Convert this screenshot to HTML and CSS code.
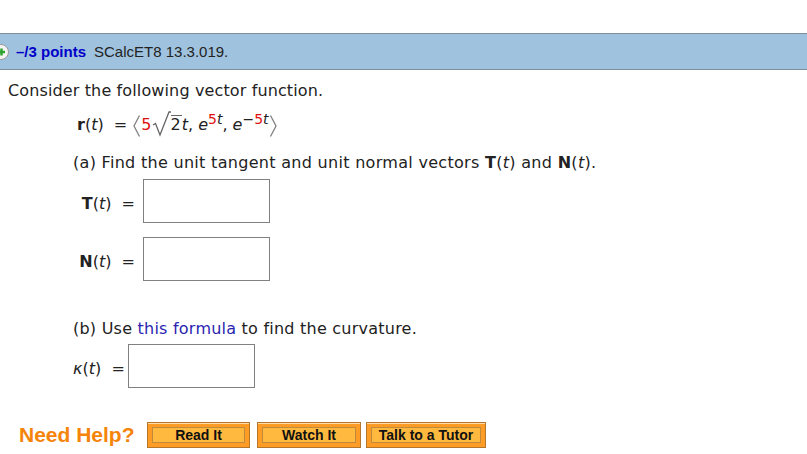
FILE: index.html
```html
<!DOCTYPE html>
<html lang="en">
<head>
<meta charset="utf-8">
<title>Question</title>
<link rel="stylesheet" href="styles.css">
</head>
<body>
<header class="qbar">
  <svg class="plus" width="12" height="20" viewBox="0 0 12 20"><circle cx="1" cy="10" r="7.5" fill="#f4f4f4" stroke="#9a9a9a"/><path d="M-2 10H5M1.500 6.500V13.500" stroke="#2fa52f" stroke-width="2.500"/></svg>
  <span class="score">–/3 points</span>
  <span class="ref">SCalcET8 13.3.019.</span>
</header>
<main class="content">
  <p class="intro">Consider the following vector function.</p>
  <p class="formula"><b>r</b>(<i>t</i>) &nbsp;= <svg class="angle" width="9" height="24" viewBox="0 0 9 24"><path d="M7.500 1.500L2 12L7.500 22.500" fill="none" stroke="#808080" stroke-width="1.300"/></svg><span class="red">5</span><svg class="radical" width="19" height="26" viewBox="0 0 19 26"><path d="M1 14L3.500 12.500L8 24L17 1H19" fill="none" stroke="#666" stroke-width="1.300"/></svg><span class="radicand">2</span><i>t</i>, <i>e</i><sup class="red">5<i class="black">t</i></sup>, <i>e</i><sup><span class="dash">−</span><span class="red">5</span><i>t</i></sup><svg class="angle" width="9" height="24" viewBox="0 0 9 24"><path d="M1.500 1.500L7 12L1.500 22.500" fill="none" stroke="#808080" stroke-width="1.300"/></svg></p>
  <p class="part parta">(a) Find the unit tangent and unit normal vectors <b>T</b>(<i>t</i>) and <b>N</b>(<i>t</i>).</p>
  <div class="answer first">
    <span class="label"><b>T</b>(<i>t</i>) &nbsp;=</span>
    <span class="box"></span>
  </div>
  <div class="answer second">
    <span class="label"><b>N</b>(<i>t</i>) &nbsp;=</span>
    <span class="box"></span>
  </div>
  <p class="part partb">(b) Use <a class="link" href="#">this formula</a> to find the curvature.</p>
  <div class="answer third">
    <span class="label short"><i class="kappa">κ</i>(<i>t</i>) &nbsp;=</span>
    <span class="box"></span>
  </div>
  <div class="help">
    <span class="need">Need Help?</span>
    <button class="btn read">Read It</button>
    <button class="btn watch">Watch It</button>
    <button class="btn tutor">Talk to a Tutor</button>
  </div>
</main>
</body>
</html>
```

FILE: styles.css
```css
* { box-sizing: border-box; }
html, body { margin: 0; padding: 0; background: #fff; overflow: hidden; }
body { width: 807px; height: 454px; padding-top: 33px; font-family: "DejaVu Sans", sans-serif; font-size: 16px; color: #222; }
p { margin: 0; }
.qbar { height: 37px; display: flex; align-items: center; background: #9fc2df; border-top: 1px solid #7e8e9c; border-bottom: 1px solid #7e8e9c; font-family: "Liberation Sans", sans-serif; font-size: 15px; }
.plus { flex: none; overflow: visible; }
.score { margin-left: 4px; font-weight: bold; color: #0000c8; }
.ref { margin-left: 8px; color: #222; }
.content { padding: 0 0 0 8px; }
.intro { line-height: 20px; margin-top: 11px; letter-spacing: 0.13px; }
.formula { margin: 11px 0 0 69px; height: 26px; line-height: 26px; white-space: nowrap; }
.angle, .radical { vertical-align: middle; }
.radical { margin-top: -4px; }
.radicand { display: inline-block; border-top: 1.300px solid #666; line-height: 18px; height: 19px; padding-right: 1px; }
.red { color: #e01010; }
.black { color: #222; }
.dash { color: #222; }
sup { font-size: 14px; line-height: 0; vertical-align: 6px; }
.part { margin: 15px 0 0 65px; line-height: 20px; white-space: nowrap; }
.parta { letter-spacing: 0.3px; }
.answer { display: flex; align-items: center; margin-left: 65px; height: 44px; }
.first { margin-top: 6px; }
.second { margin-top: 14px; }
.third { margin-top: 5px; }
.label { width: 70px; text-align: right; padding-right: 8px; padding-top: 4px; white-space: nowrap; }
.label.short { width: 55px; padding-right: 7px; }
.box { width: 127px; height: 44px; border: 1px solid #808080; background: #fff; }
.partb { margin-top: 38px; letter-spacing: 0.23px; }
.link { color: #2a1fb0; text-decoration: none; }
.help { display: flex; align-items: center; margin: 34px 0 0 11px; height: 26px; }
.need { width: 128px; font-family: "Liberation Sans", sans-serif; font-weight: bold; font-size: 21px; color: #f5840a; }
.btn { height: 26px; padding: 0; margin: 0 7px 0 0; border: 1px solid #b5762c; font-family: "Liberation Sans", sans-serif; font-weight: bold; font-size: 14px; color: #111; background: #ffb93f; box-shadow: inset 0 1px 0 #ffdca8, inset 0 0 0 4px #ff9c26, inset 0 0 0 5px #c08a3c; }
.read { width: 103px; }
.watch { width: 104px; margin-right: 5px; }
.tutor { width: 120px; }
```
